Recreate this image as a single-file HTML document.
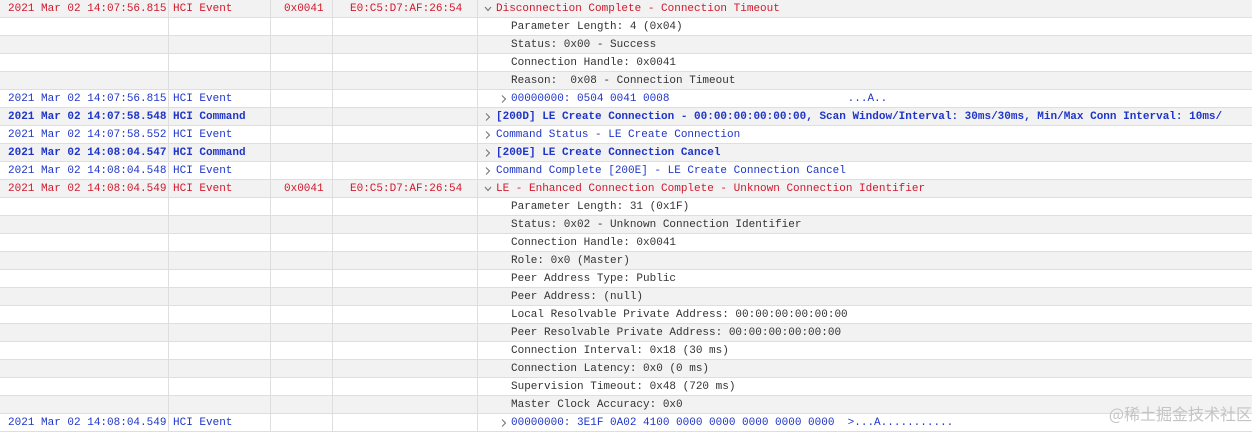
<!DOCTYPE html>
<html><head><meta charset="utf-8"><style>
body{margin:0;width:1258px;height:433px;overflow:hidden;background:#fff;font-family:"Liberation Mono",monospace;font-size:11px;}
.r{position:absolute;left:0;width:1252px;height:18px;border-bottom:1px solid #dedede;box-sizing:border-box;}
.g{background:#f2f2f2}
.c{position:absolute;top:0;height:17px;line-height:18px;white-space:pre;border-right:1px solid #dedede;box-sizing:border-box;overflow:hidden}
.a{left:0;width:169px;padding-left:8px}.b{left:169px;width:102px;padding-left:4px}.cc{left:271px;width:62px;padding-left:13px}.d{left:333px;width:145px;padding-left:17px}.e{left:478px;width:774px;border-right:none}
.red{color:#d0182c}.blue{color:#1f35c8}.bold{font-weight:bold}.det{color:#333}
</style></head><body>
<div id="t"></div>
<div style="position:absolute;right:6px;top:401px;color:#c4c4c4;font-family:'Noto Sans CJK SC',sans-serif;font-size:16px;">@稀土掘金技术社区</div>
<script>
const rows=[
["r","2021 Mar 02 14:07:56.815","HCI Event","0x0041","E0:C5:D7:AF:26:54","v","Disconnection Complete - Connection Timeout"],
["d","Parameter Length: 4 (0x04)"],
["d","Status: 0x00 - Success"],
["d","Connection Handle: 0x0041"],
["d","Reason:  0x08 - Connection Timeout"],
["h","2021 Mar 02 14:07:56.815","HCI Event","","",">","00000000: 0504 0041 0008                           ...A.."],
["bb","2021 Mar 02 14:07:58.548","HCI Command","","",">","[200D] LE Create Connection - 00:00:00:00:00:00, Scan Window/Interval: 30ms/30ms, Min/Max Conn Interval: 10ms/"],
["b","2021 Mar 02 14:07:58.552","HCI Event","","",">","Command Status - LE Create Connection"],
["bb","2021 Mar 02 14:08:04.547","HCI Command","","",">","[200E] LE Create Connection Cancel"],
["b","2021 Mar 02 14:08:04.548","HCI Event","","",">","Command Complete [200E] - LE Create Connection Cancel"],
["r","2021 Mar 02 14:08:04.549","HCI Event","0x0041","E0:C5:D7:AF:26:54","v","LE - Enhanced Connection Complete - Unknown Connection Identifier"],
["d","Parameter Length: 31 (0x1F)"],
["d","Status: 0x02 - Unknown Connection Identifier"],
["d","Connection Handle: 0x0041"],
["d","Role: 0x0 (Master)"],
["d","Peer Address Type: Public"],
["d","Peer Address: (null)"],
["d","Local Resolvable Private Address: 00:00:00:00:00:00"],
["d","Peer Resolvable Private Address: 00:00:00:00:00:00"],
["d","Connection Interval: 0x18 (30 ms)"],
["d","Connection Latency: 0x0 (0 ms)"],
["d","Supervision Timeout: 0x48 (720 ms)"],
["d","Master Clock Accuracy: 0x0"],
["h","2021 Mar 02 14:08:04.549","HCI Event","","",">","00000000: 3E1F 0A02 4100 0000 0000 0000 0000 0000  >...A..........."]
];
let h="";
rows.forEach((r,i)=>{
 const g=i%2==0?" g":"";
 let cls="",a="",b="",c="",d="",e="";
 if(r[0]=="d"){cls="det";e=`<span style="position:absolute;left:33px">${r[1]}</span>`;}
 else{
  cls=r[0]=="r"?"red":(r[0]=="bb"?"blue bold":"blue");
  a=r[1];b=r[2];c=r[3];d=r[4];
  const ax=r[0]=="h"?22:6;const tx=r[0]=="h"?33:18;
  const arrow=r[5]=="v"?'<svg style="position:absolute;top:6px;left:'+ax+'px" width="8" height="6"><path d="M1 1 L4 4.5 L7 1" fill="none" stroke="#777" stroke-width="1.1"/></svg>':'<svg style="position:absolute;top:5px;left:'+(ax+1)+'px" width="6" height="8"><path d="M1 0.5 L4.5 4 L1 7.5" fill="none" stroke="#777" stroke-width="1.1"/></svg>';
  e=arrow+`<span style="position:absolute;left:${tx}px">${r[6]}</span>`;
 }
 h+=`<div class="r${g} ${cls}" style="top:${i*18}px"><div class="c a">${a}</div><div class="c b">${b}</div><div class="c cc">${c}</div><div class="c d">${d}</div><div class="c e">${e}</div></div>`;
});
document.getElementById("t").innerHTML=h;
</script>
</body></html>
